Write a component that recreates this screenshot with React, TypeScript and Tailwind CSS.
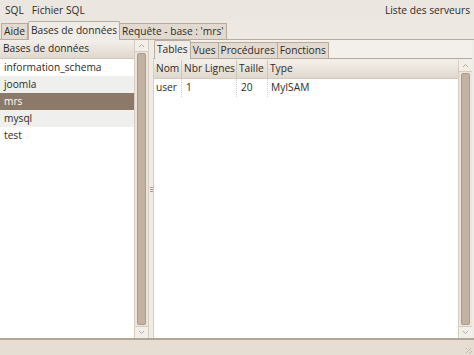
import { ReactNode } from 'react';

const font = { fontFamily: '"Open Sans", "Noto Sans", sans-serif' };

const databases = ['information_schema', 'joomla', 'mrs', 'mysql', 'test'];

function Tab({ label, active, first }: { label: string; active?: boolean; first?: boolean }) {
  return (
    <div
      className={`px-[2px] flex items-center whitespace-nowrap border-[#b9ab9c] ${
        active
          ? 'h-[19px] bg-[#efebe6] border-t border-l border-r rounded-t-[2px] -mb-px z-10'
          : `h-[16px] bg-[#e2dad0] border-t ${first ? 'border-l' : ''} border-r`
      }`}
    >
      {label}
    </div>
  );
}

function VScroll() {
  return (
    <div className="w-[14px] h-full flex flex-col bg-[#ebe5dd] border-l border-[#d6ccc0]">
      <div className="h-[12px] flex items-center justify-center text-[#b4a898] bg-[#f2eee9] border-b border-[#d6ccc0]">
        <svg width="7" height="5" viewBox="0 0 7 5">
          <path d="M1 4 L3.5 1.5 L6 4" stroke="currentColor" fill="none" strokeWidth="1" />
        </svg>
      </div>
      <div className="flex-1 mx-[2px] my-[1px] rounded-[2px] bg-[#c2b2a1] border border-[#ad9c8a]" />
      <div className="h-[12px] flex items-center justify-center text-[#b4a898] bg-[#f2eee9] border-t border-[#d6ccc0]">
        <svg width="7" height="5" viewBox="0 0 7 5">
          <path d="M1 1 L3.5 3.5 L6 1" stroke="currentColor" fill="none" strokeWidth="1" />
        </svg>
      </div>
    </div>
  );
}

function HeadCell({ children, w, last }: { children: ReactNode; w?: string; last?: boolean }) {
  return (
    <div className={`${w ?? 'flex-1'} px-[2px] flex items-center whitespace-nowrap ${last ? '' : 'border-r border-[#cfc5b9]'}`}>
      {children}
    </div>
  );
}

export default function App() {
  return (
    <div style={font} className="w-[474px] h-[355px] flex flex-col bg-[#ede8e2] text-[10.2px] text-[#2e2a26] overflow-hidden">
      {/* menu bar */}
      <div className="h-[21px] flex items-center px-[5px] gap-[8px] bg-[#ebe6df]">
        <span>SQL</span>
        <span>Fichier SQL</span>
        <span className="ml-auto mr-[-1px]">Liste des serveurs</span>
      </div>

      {/* top tabs */}
      <div className="h-[19px] flex items-end pl-[1px] border-b border-[#b9ab9c]">
        <Tab label="Aide" first />
        <Tab label="Bases de données" active />
        <Tab label="Requête - base : 'mrs'" />
      </div>

      {/* content */}
      <div className="flex-1 flex min-h-0 bg-[#efebe6]">
        {/* left pane */}
        <div className="w-[148px] flex">
          <div className="flex-1 flex flex-col bg-white">
            <div className="h-[19px] flex items-center px-[3px] bg-gradient-to-b from-[#f3efea] to-[#e0d8ce] border-b border-[#cfc5b9]">
              Bases de données
            </div>
            {databases.map((d, i) => (
              <div
                key={d}
                className={`h-[17px] flex items-center px-[4px] ${
                  d === 'mrs' ? 'bg-[#8c7967] text-white' : i % 2 === 1 ? 'bg-[#efefed]' : 'bg-white'
                }`}
              >
                {d}
              </div>
            ))}
          </div>
          <VScroll />
        </div>

        {/* splitter */}
        <div className="w-[5px] flex items-center justify-center bg-[#efebe6] border-l border-[#d6ccc0]">
          <div className="flex flex-col gap-[1px]">
            <div className="w-[3px] h-px bg-[#a8998a]" />
            <div className="w-[3px] h-px bg-[#a8998a]" />
            <div className="w-[3px] h-px bg-[#a8998a]" />
          </div>
        </div>

        {/* right pane */}
        <div className="flex-1 flex flex-col min-w-0 pr-[2px]">
          <div className="h-[19px] flex items-end pl-[1px] border-b border-[#b9ab9c] bg-[#f3efea]">
            <Tab label="Tables" active first />
            <Tab label="Vues" />
            <Tab label="Procédures" />
            <Tab label="Fonctions" />
          </div>
          <div className="flex-1 flex min-h-0 bg-white border-l border-[#d6ccc0] mt-[1px]">
            <div className="flex-1 flex flex-col">
              <div className="h-[19px] flex bg-gradient-to-b from-[#f3efea] to-[#e0d8ce] border-b border-[#d3c9bd]">
                <HeadCell w="w-[28px]">Nom</HeadCell>
                <HeadCell w="w-[55px]">Nbr Lignes</HeadCell>
                <HeadCell w="w-[31px]">Taille</HeadCell>
                <HeadCell last>Type</HeadCell>
              </div>
              <div className="h-[18px] flex">
                <div className="w-[28px] px-[2px] flex items-center border-r border-dotted border-[#d8d0c6]">user</div>
                <div className="w-[55px] px-[4px] flex items-center border-r border-dotted border-[#d8d0c6]">1</div>
                <div className="w-[31px] px-[4px] flex items-center border-r border-dotted border-[#d8d0c6]">20</div>
                <div className="flex-1 px-[3px] flex items-center">MyISAM</div>
              </div>
            </div>
            <VScroll />
          </div>
        </div>
      </div>

      {/* status bar */}
      <div className="h-[17px] bg-[#e6ddd3] border-t-2 border-[#b3a595] flex justify-end items-end pr-[2px] pb-[1px]">
        <div className="w-[6px] h-[6px] opacity-40 bg-[repeating-linear-gradient(135deg,#8c7967_0_1px,transparent_1px_3px)]" />
      </div>
    </div>
  );
}
